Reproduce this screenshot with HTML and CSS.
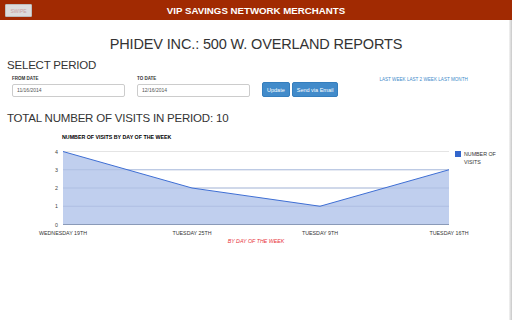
FILE: index.html
```html
<!DOCTYPE html>
<html>
<head>
<meta charset="utf-8">
<link rel="stylesheet" href="styles.css">
</head>
<body>
<header class="topbar">
  <button class="swipe">SWIPE</button>
  <div class="brand">VIP SAVINGS NETWORK MERCHANTS</div>
</header>
<main class="page">
  <h1 class="title">PHIDEV INC.: 500 W. OVERLAND REPORTS</h1>
  <h2 class="section">SELECT PERIOD</h2>
  <div class="period">
    <div class="field">
      <label class="lbl">FROM DATE</label>
      <div class="input">11/16/2014</div>
    </div>
    <div class="field">
      <label class="lbl">TO DATE</label>
      <div class="input">12/16/2014</div>
    </div>
    <div class="buttons">
      <button class="btn">Update</button>
      <button class="btn">Send via Email</button>
    </div>
    <div class="quick">
      <a>LAST WEEK</a> <a>LAST 2 WEEK</a> <a>LAST MONTH</a>
    </div>
  </div>
  <h2 class="section total">TOTAL NUMBER OF VISITS IN PERIOD: 10</h2>
  <div class="chart">
    <svg width="512" height="120" viewBox="0 0 512 120" xmlns="http://www.w3.org/2000/svg">
      <text x="62" y="8" class="ctitle">NUMBER OF VISITS BY DAY OF THE WEEK</text>
      <g class="grid">
        <line x1="63" x2="449" y1="20.5" y2="20.5"/>
        <line x1="63" x2="449" y1="38.75" y2="38.75"/>
        <line x1="63" x2="449" y1="57" y2="57"/>
        <line x1="63" x2="449" y1="75.25" y2="75.25"/>
      </g>
      <polygon class="area" points="63,20.5 192,57 320,75.25 449,38.75 449,93.5 63,93.5"/>
      <g class="grid2">
        <line x1="63" x2="449" y1="38.75" y2="38.75"/>
        <line x1="63" x2="449" y1="57" y2="57"/>
        <line x1="63" x2="449" y1="75.25" y2="75.25"/>
      </g>
      <line class="base" x1="63" x2="449" y1="93.5" y2="93.5"/>
      <polyline class="line" points="63,20.5 192,57 320,75.25 449,38.75"/>
      <g class="ylab">
        <text x="58" y="22.5">4</text>
        <text x="58" y="40.75">3</text>
        <text x="58" y="59">2</text>
        <text x="58" y="77.25">1</text>
        <text x="58" y="95.5">0</text>
      </g>
      <g class="xlab">
        <text x="63" y="103.5">WEDNESDAY 19TH</text>
        <text x="192" y="103.5">TUESDAY 25TH</text>
        <text x="320" y="103.5">TUESDAY 9TH</text>
        <text x="449" y="103.5">TUESDAY 16TH</text>
      </g>
      <text x="256" y="112" class="xtitle">BY DAY OF THE WEEK</text>
      <rect x="455" y="20" width="6" height="6" class="swatch"/>
      <text x="464" y="25" class="legend">NUMBER OF</text>
      <text x="464" y="33" class="legend">VISITS</text>
    </svg>
  </div>
</main>
<div class="edge"></div>
</body>
</html>
```
FILE: styles.css
```css
html, body {
  margin: 0;
  padding: 0;
  background: #fff;
  font-family: "Liberation Sans", Arial, sans-serif;
  color: #333;
}
.topbar {
  position: relative;
  height: 20px;
  background: #a12a02;
  display: flex;
  align-items: center;
  justify-content: center;
}
.swipe {
  position: absolute;
  left: 5px;
  top: 4px;
  width: 27px;
  height: 13px;
  padding: 0;
  background: #dcdcdc;
  border: 1px solid #bdbdbd;
  border-radius: 1px;
  color: #c9a0a0;
  font-family: "Liberation Sans", Arial, sans-serif;
  font-size: 5px;
}
.brand {
  color: #fff;
  font-weight: bold;
  font-size: 9.7px;
}
.page {
  padding: 0 7px;
}
.title {
  margin: 15px 0 0;
  text-align: center;
  font-weight: normal;
  font-size: 14.5px;
  letter-spacing: -0.15px;
  line-height: 18px;
  color: #333;
}
.section {
  margin: 5px 0 0;
  font-weight: normal;
  font-size: 11.5px;
  letter-spacing: -0.2px;
  line-height: 15px;
  color: #333;
}
.period {
  display: flex;
  align-items: flex-start;
  padding-left: 5px;
  margin-top: 3px;
}
.field {
  display: flex;
  flex-direction: column;
  width: 113px;
  margin-right: 12px;
}
.lbl {
  font-size: 4.5px;
  font-weight: bold;
  color: #333;
  line-height: 6px;
  height: 8px;
}
.input {
  height: 11px;
  border: 1px solid #ccc;
  border-radius: 2px;
  font-size: 5px;
  line-height: 11px;
  padding-left: 4px;
  color: #555;
}
.buttons {
  display: flex;
  gap: 2px;
  margin-top: 6px;
}
.btn {
  height: 15px;
  padding: 0 4px;
  border: 1px solid #357ebd;
  border-radius: 2px;
  background: #428bca;
  color: #fff;
  font-family: "Liberation Sans", Arial, sans-serif;
  font-size: 5.5px;
}
.quick {
  margin-left: 41px;
  margin-top: 1px;
  font-size: 4.6px;
  color: #428bca;
}
.total {
  margin-top: 14px;
  font-size: 11.5px;
}
.chart {
  margin: 5px 0 0 -7px;
}
.chart svg {
  display: block;
}
.ctitle {
  font-size: 5.3px;
  font-weight: bold;
  fill: #000;
}
.grid line {
  stroke: #e4e4e4;
  stroke-width: 1;
}
.grid2 line {
  stroke: #aebfe2;
  stroke-width: 1;
}
.area {
  fill: #c0cfee;
}
.base {
  stroke: #8a9ab8;
  stroke-width: 1;
}
.line {
  fill: none;
  stroke: #3f6fd4;
  stroke-width: 1;
}
.ylab text {
  font-size: 5.3px;
  fill: #444;
  text-anchor: end;
}
.xlab text {
  font-size: 5.3px;
  fill: #333;
  text-anchor: middle;
}
.xtitle {
  font-size: 5.3px;
  font-style: italic;
  fill: #e8343a;
  text-anchor: middle;
}
.swatch {
  fill: #3366cc;
}
.legend {
  font-size: 5.3px;
  fill: #333;
}
.edge {
  position: fixed;
  right: 0;
  top: 20px;
  bottom: 0;
  width: 3px;
  background: linear-gradient(to right, #f4f4f4, #c8c8c8);
}
```
